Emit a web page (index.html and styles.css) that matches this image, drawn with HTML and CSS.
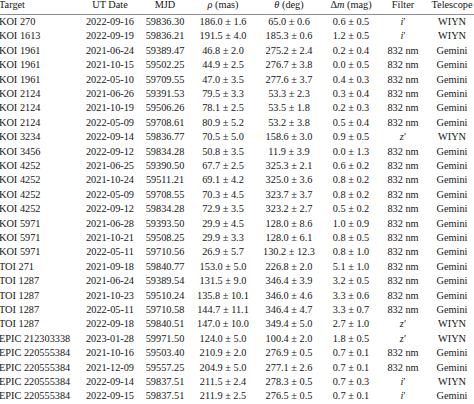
FILE: index.html
```html
<!DOCTYPE html>
<html>
<head>
<meta charset="utf-8">
<link rel="stylesheet" href="styles.css">
</head>
<body>
<table class="obs">
<colgroup>
<col class="c-target"><col class="c-date"><col class="c-mjd"><col class="c-rho"><col class="c-theta"><col class="c-dm"><col class="c-filter"><col class="c-tel">
</colgroup>
<thead>
<tr><th class="left">Target</th><th>UT Date</th><th>MJD</th><th><i>ρ</i> (mas)</th><th><i>θ</i> (deg)</th><th>Δ<i>m</i> (mag)</th><th>Filter</th><th>Telescope</th></tr>
</thead>
<tbody>
<tr><td class="left">KOI 270</td><td>2022-09-16</td><td>59836.30</td><td>186.0 ± 1.6</td><td>65.0 ± 0.6</td><td>0.6 ± 0.5</td><td><i>i</i>′</td><td>WIYN</td></tr>
<tr><td class="left">KOI 1613</td><td>2022-09-19</td><td>59836.21</td><td>191.5 ± 4.0</td><td>185.3 ± 0.6</td><td>1.2 ± 0.5</td><td><i>i</i>′</td><td>WIYN</td></tr>
<tr><td class="left">KOI 1961</td><td>2021-06-24</td><td>59389.47</td><td>46.8 ± 2.0</td><td>275.2 ± 2.4</td><td>0.2 ± 0.4</td><td>832 nm</td><td>Gemini</td></tr>
<tr><td class="left">KOI 1961</td><td>2021-10-15</td><td>59502.25</td><td>44.9 ± 2.5</td><td>276.7 ± 3.8</td><td>0.0 ± 0.5</td><td>832 nm</td><td>Gemini</td></tr>
<tr><td class="left">KOI 1961</td><td>2022-05-10</td><td>59709.55</td><td>47.0 ± 3.5</td><td>277.6 ± 3.7</td><td>0.4 ± 0.3</td><td>832 nm</td><td>Gemini</td></tr>
<tr><td class="left">KOI 2124</td><td>2021-06-26</td><td>59391.53</td><td>79.5 ± 3.3</td><td>53.3 ± 2.3</td><td>0.3 ± 0.4</td><td>832 nm</td><td>Gemini</td></tr>
<tr><td class="left">KOI 2124</td><td>2021-10-19</td><td>59506.26</td><td>78.1 ± 2.5</td><td>53.5 ± 1.8</td><td>0.2 ± 0.3</td><td>832 nm</td><td>Gemini</td></tr>
<tr><td class="left">KOI 2124</td><td>2022-05-09</td><td>59708.61</td><td>80.9 ± 5.2</td><td>53.2 ± 3.8</td><td>0.5 ± 0.4</td><td>832 nm</td><td>Gemini</td></tr>
<tr><td class="left">KOI 3234</td><td>2022-09-14</td><td>59836.77</td><td>70.5 ± 5.0</td><td>158.6 ± 3.0</td><td>0.9 ± 0.5</td><td><i>z</i>′</td><td>WIYN</td></tr>
<tr><td class="left">KOI 3456</td><td>2022-09-12</td><td>59834.28</td><td>50.8 ± 3.5</td><td>11.9 ± 3.9</td><td>0.0 ± 1.3</td><td>832 nm</td><td>Gemini</td></tr>
<tr><td class="left">KOI 4252</td><td>2021-06-25</td><td>59390.50</td><td>67.7 ± 2.5</td><td>325.3 ± 2.1</td><td>0.6 ± 0.2</td><td>832 nm</td><td>Gemini</td></tr>
<tr><td class="left">KOI 4252</td><td>2021-10-24</td><td>59511.21</td><td>69.1 ± 4.2</td><td>325.0 ± 3.6</td><td>0.8 ± 0.2</td><td>832 nm</td><td>Gemini</td></tr>
<tr><td class="left">KOI 4252</td><td>2022-05-09</td><td>59708.55</td><td>70.3 ± 4.5</td><td>323.7 ± 3.7</td><td>0.8 ± 0.2</td><td>832 nm</td><td>Gemini</td></tr>
<tr><td class="left">KOI 4252</td><td>2022-09-12</td><td>59834.28</td><td>72.9 ± 3.5</td><td>323.2 ± 2.7</td><td>0.5 ± 0.2</td><td>832 nm</td><td>Gemini</td></tr>
<tr><td class="left">KOI 5971</td><td>2021-06-28</td><td>59393.50</td><td>29.9 ± 4.5</td><td>128.0 ± 8.6</td><td>1.0 ± 0.9</td><td>832 nm</td><td>Gemini</td></tr>
<tr><td class="left">KOI 5971</td><td>2021-10-21</td><td>59508.25</td><td>29.9 ± 3.3</td><td>128.0 ± 6.1</td><td>0.8 ± 0.5</td><td>832 nm</td><td>Gemini</td></tr>
<tr><td class="left">KOI 5971</td><td>2022-05-11</td><td>59710.56</td><td>26.9 ± 5.7</td><td>130.2 ± 12.3</td><td>0.8 ± 1.0</td><td>832 nm</td><td>Gemini</td></tr>
<tr><td class="left">TOI 271</td><td>2021-09-18</td><td>59840.77</td><td>153.0 ± 5.0</td><td>226.8 ± 2.0</td><td>5.1 ± 1.0</td><td>832 nm</td><td>Gemini</td></tr>
<tr><td class="left">TOI 1287</td><td>2021-06-24</td><td>59389.54</td><td>131.5 ± 9.0</td><td>346.4 ± 3.9</td><td>3.2 ± 0.5</td><td>832 nm</td><td>Gemini</td></tr>
<tr><td class="left">TOI 1287</td><td>2021-10-23</td><td>59510.24</td><td>135.8 ± 10.1</td><td>346.0 ± 4.6</td><td>3.3 ± 0.6</td><td>832 nm</td><td>Gemini</td></tr>
<tr><td class="left">TOI 1287</td><td>2022-05-11</td><td>59710.58</td><td>144.7 ± 11.1</td><td>346.4 ± 4.7</td><td>3.3 ± 0.7</td><td>832 nm</td><td>Gemini</td></tr>
<tr><td class="left">TOI 1287</td><td>2022-09-18</td><td>59840.51</td><td>147.0 ± 10.0</td><td>349.4 ± 5.0</td><td>2.7 ± 1.0</td><td><i>z</i>′</td><td>WIYN</td></tr>
<tr><td class="left">EPIC 212303338</td><td>2023-01-28</td><td>59971.50</td><td>124.0 ± 5.0</td><td>100.4 ± 2.0</td><td>1.8 ± 0.5</td><td><i>z</i>′</td><td>WIYN</td></tr>
<tr><td class="left">EPIC 220555384</td><td>2021-10-16</td><td>59503.40</td><td>210.9 ± 2.0</td><td>276.9 ± 0.5</td><td>0.7 ± 0.1</td><td>832 nm</td><td>Gemini</td></tr>
<tr><td class="left">EPIC 220555384</td><td>2021-12-09</td><td>59557.25</td><td>204.9 ± 5.0</td><td>277.1 ± 2.6</td><td>0.7 ± 0.1</td><td>832 nm</td><td>Gemini</td></tr>
<tr><td class="left">EPIC 220555384</td><td>2022-09-14</td><td>59837.51</td><td>211.5 ± 2.4</td><td>278.3 ± 0.5</td><td>0.7 ± 0.3</td><td><i>i</i>′</td><td>WIYN</td></tr>
<tr><td class="left">EPIC 220555384</td><td>2022-09-15</td><td>59837.51</td><td>211.9 ± 2.5</td><td>276.5 ± 0.5</td><td>0.7 ± 0.1</td><td><i>i</i>′</td><td>Gemini</td></tr>
</tbody>
</table>
</body>
</html>
```

FILE: styles.css
```css
html, body {
  margin: 0;
  padding: 0;
  background: #ffffff;
  overflow: hidden;
}

.obs {
  border-collapse: collapse;
  table-layout: fixed;
  width: 477px;
  margin-top: -2.5px;
  margin-left: -1px;
  font-family: "Liberation Serif", "Times New Roman", serif;
  font-size: 10.3px;
  color: #151515;
}

.c-target { width: 83px; }
.c-date { width: 56px; }
.c-mjd { width: 54px; }
.c-rho { width: 62px; }
.c-theta { width: 70px; }
.c-dm { width: 54px; }
.c-filter { width: 50px; }
.c-tel { width: 48px; }

.obs th,
.obs td {
  padding: 0;
  text-align: center;
  white-space: nowrap;
  line-height: 14.4px;
  height: 14.4px;
  font-weight: normal;
}

.obs th {
  padding-bottom: 2px;
  border-bottom: 1px solid #8c8c8c;
}

.obs .left {
  text-align: left;
}
```
